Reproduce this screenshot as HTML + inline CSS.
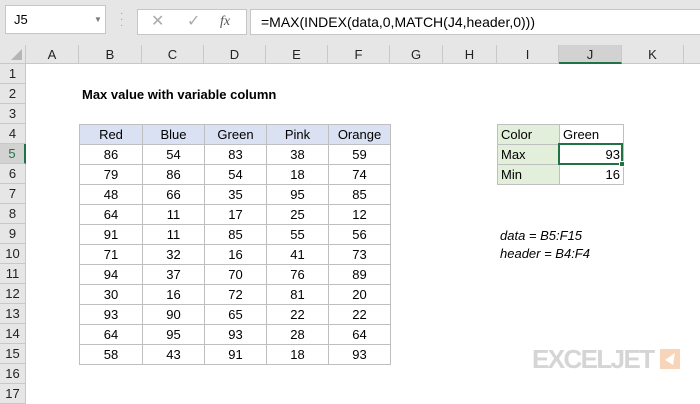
<!DOCTYPE html>
<html><head><meta charset="utf-8"><style>
*{margin:0;padding:0;box-sizing:border-box}
body{width:700px;height:400px;overflow:hidden;background:#fff;font-family:"Liberation Sans",Calibri,sans-serif;font-size:13px;color:#000;position:relative}
.a{position:absolute}
.top{left:0;top:0;width:700px;height:45px;background:#e6e6e6}
.box{background:#fff;border:1px solid #c6c6c6}
.ch{top:45px;height:19px;background:#e6e6e6;border-right:1px solid #c8c8c8;border-bottom:1px solid #c8c8c8;text-align:center;line-height:19px;color:#222}
.rh{left:0;width:26px;height:20px;background:#e6e6e6;border-bottom:1px solid #c8c8c8;border-right:1px solid #c8c8c8;text-align:center;line-height:20px;color:#222}
table{position:absolute;border-collapse:collapse;table-layout:fixed}
td{border:1px solid #bfbfbf;height:20px;padding:0 3px;line-height:18px;text-align:center}
.hd td{background:#d9e1f2}
</style></head><body>
<div class="a top"></div>
<div class="a box" style="left:5px;top:5px;width:101px;height:29px;line-height:27px;padding-left:8px">J5<span style="position:absolute;left:88px;top:0;font-size:8px;color:#777">▼</span></div>
<div class="a" style="left:120px;top:11px;width:3px;height:18px;color:#999;font-size:10px;line-height:6px">·<br>·<br>·</div>
<div class="a box" style="left:137px;top:9px;width:110px;height:26px;color:#aaa;font-size:16px;line-height:24px"><span style="position:absolute;left:13px">✕</span><span style="position:absolute;left:49px">✓</span><span style="position:absolute;left:82px;color:#555;font-style:italic;font-family:'Liberation Serif',serif;font-size:14px">fx</span></div>
<div class="a box" style="left:250px;top:9px;width:452px;height:26px;line-height:24px;padding-left:10px;font-size:14px">=MAX(INDEX(data,0,MATCH(J4,header,0)))</div>
<div class="a" style="left:0;top:45px;width:26px;height:19px;background:#e6e6e6;border-right:1px solid #c8c8c8;border-bottom:1px solid #c8c8c8"><div class="a" style="right:3px;bottom:3px;width:0;height:0;border-left:11px solid transparent;border-bottom:11px solid #b5b5b5"></div></div>
<div class="a ch" style="left:26px;width:53px">A</div>
<div class="a ch" style="left:79px;width:63px">B</div>
<div class="a ch" style="left:142px;width:62px">C</div>
<div class="a ch" style="left:204px;width:62px">D</div>
<div class="a ch" style="left:266px;width:62px">E</div>
<div class="a ch" style="left:328px;width:62px">F</div>
<div class="a ch" style="left:390px;width:53px">G</div>
<div class="a ch" style="left:443px;width:54px">H</div>
<div class="a ch" style="left:497px;width:62px">I</div>
<div class="a ch" style="left:559px;width:63px;background:#d2d2d2;border-bottom:2px solid #217346">J</div>
<div class="a ch" style="left:622px;width:62px">K</div>
<div class="a ch" style="left:684px;width:30px"></div>
<div class="a rh" style="top:64px">1</div>
<div class="a rh" style="top:84px">2</div>
<div class="a rh" style="top:104px">3</div>
<div class="a rh" style="top:124px">4</div>
<div class="a rh" style="top:144px;background:#d2d2d2;border-right:2px solid #217346;color:#217346">5</div>
<div class="a rh" style="top:164px">6</div>
<div class="a rh" style="top:184px">7</div>
<div class="a rh" style="top:204px">8</div>
<div class="a rh" style="top:224px">9</div>
<div class="a rh" style="top:244px">10</div>
<div class="a rh" style="top:264px">11</div>
<div class="a rh" style="top:284px">12</div>
<div class="a rh" style="top:304px">13</div>
<div class="a rh" style="top:324px">14</div>
<div class="a rh" style="top:344px">15</div>
<div class="a rh" style="top:364px">16</div>
<div class="a rh" style="top:384px">17</div>
<div class="a" style="left:82px;top:86px;font-weight:bold;line-height:18px">Max value with variable column</div>
<table style="left:79px;top:124px;width:312px">
<colgroup><col style="width:63px"><col style="width:62px"><col style="width:62px"><col style="width:62px"><col style="width:62px"></colgroup>
<tr class="hd"><td>Red</td><td>Blue</td><td>Green</td><td>Pink</td><td>Orange</td></tr>
<tr><td>86</td><td>54</td><td>83</td><td>38</td><td>59</td></tr>
<tr><td>79</td><td>86</td><td>54</td><td>18</td><td>74</td></tr>
<tr><td>48</td><td>66</td><td>35</td><td>95</td><td>85</td></tr>
<tr><td>64</td><td>11</td><td>17</td><td>25</td><td>12</td></tr>
<tr><td>91</td><td>11</td><td>85</td><td>55</td><td>56</td></tr>
<tr><td>71</td><td>32</td><td>16</td><td>41</td><td>73</td></tr>
<tr><td>94</td><td>37</td><td>70</td><td>76</td><td>89</td></tr>
<tr><td>30</td><td>16</td><td>72</td><td>81</td><td>20</td></tr>
<tr><td>93</td><td>90</td><td>65</td><td>22</td><td>22</td></tr>
<tr><td>64</td><td>95</td><td>93</td><td>28</td><td>64</td></tr>
<tr><td>58</td><td>43</td><td>91</td><td>18</td><td>93</td></tr>
</table>
<table style="left:497px;top:124px;width:126px">
<colgroup><col style="width:62px"><col style="width:64px"></colgroup>
<tr><td style="background:#e2efda;text-align:left">Color</td><td style="text-align:left">Green</td></tr>
<tr><td style="background:#e2efda;text-align:left">Max</td><td style="text-align:right">93</td></tr>
<tr><td style="background:#e2efda;text-align:left">Min</td><td style="text-align:right">16</td></tr>
</table>
<div class="a" style="left:558px;top:143px;width:65px;height:22px;border:2px solid #217346"></div>
<div class="a" style="left:619px;top:161px;width:6px;height:6px;background:#217346;border:1px solid #fff"></div>
<div class="a" style="left:500px;top:227px;font-style:italic;line-height:18px">data = B5:F15<br>header = B4:F4</div>
<div class="a" style="left:532px;top:344px;font-weight:bold;font-size:26px;color:#d5d5d5;letter-spacing:-1.6px;line-height:30px;font-family:'Liberation Sans',sans-serif">EXCELJET</div>
<div class="a" style="left:660px;top:349px;width:20px;height:20px;background:#f8d4b8"><svg width="20" height="20"><path d="M15 4 L5 11 L13 16 Z" fill="#fff"/></svg></div>
</body></html>
